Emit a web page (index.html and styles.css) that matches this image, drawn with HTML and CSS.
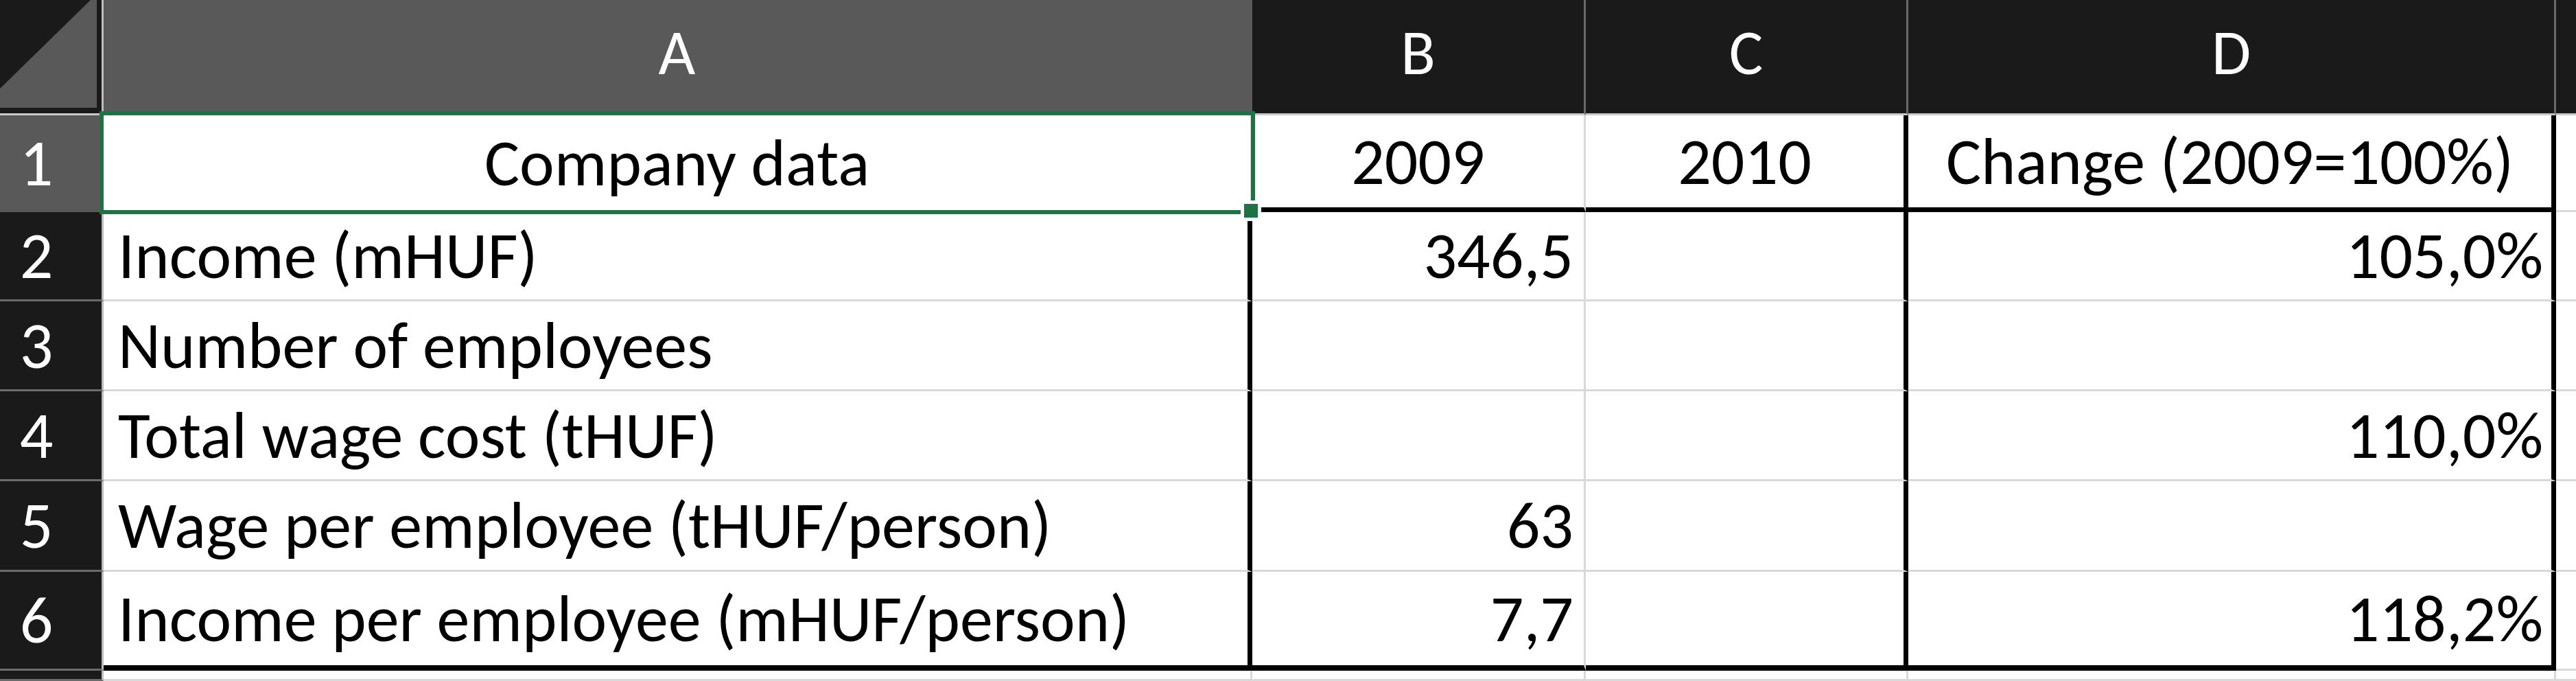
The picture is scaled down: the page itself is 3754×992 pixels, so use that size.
FILE: index.html
```html
<!DOCTYPE html>
<html lang="en">
<head>
<meta charset="utf-8">
<title>Company data</title>
<link rel="stylesheet" href="styles.css">
</head>
<body>
<div class="sheet">
  <div class="corner"><svg class="corner-tri" width="148" height="165" viewBox="0 0 148 165"><polygon points="132,0 141,0 141,157 0,157 0,129" fill="#595959"/></svg></div>
  <div class="ch ch-sel">A</div>
  <div class="ch">B</div>
  <div class="ch">C</div>
  <div class="ch">D</div>
  <div class="ch ch-last"></div>

  <div class="rh rh-sel">1</div>
  <div class="c ca r1 center">Company data</div>
  <div class="c cb r1 center">2009</div>
  <div class="c cc r1 center">2010</div>
  <div class="c cd r1 center">Change (2009=100%)</div>
  <div class="c ce"></div>

  <div class="rh">2</div>
  <div class="c ca">Income (mHUF)</div>
  <div class="c cb num">346,5</div>
  <div class="c cc"></div>
  <div class="c cd num">105,0%</div>
  <div class="c ce"></div>

  <div class="rh">3</div>
  <div class="c ca">Number of employees</div>
  <div class="c cb"></div>
  <div class="c cc"></div>
  <div class="c cd"></div>
  <div class="c ce"></div>

  <div class="rh">4</div>
  <div class="c ca">Total wage cost (tHUF)</div>
  <div class="c cb"></div>
  <div class="c cc"></div>
  <div class="c cd num">110,0%</div>
  <div class="c ce"></div>

  <div class="rh">5</div>
  <div class="c ca">Wage per employee (tHUF/person)</div>
  <div class="c cb num">63</div>
  <div class="c cc"></div>
  <div class="c cd"></div>
  <div class="c ce"></div>

  <div class="rh">6</div>
  <div class="c ca r6">Income per employee (mHUF/person)</div>
  <div class="c cb r6 num">7,7</div>
  <div class="c cc r6"></div>
  <div class="c cd r6 num">118,2%</div>
  <div class="c ce"></div>

  <div class="rh"></div>
  <div class="c ca plain"></div>
  <div class="c cb plain"></div>
  <div class="c cc plain"></div>
  <div class="c cd plain"></div>
  <div class="c ce"></div>

  <div class="selection"></div>
  <div class="handle"></div>
</div>
</body>
</html>
```

FILE: styles.css
```css
* { box-sizing: border-box; }
html, body { margin: 0; padding: 0; background: #ffffff; }
body { width: 3754px; height: 992px; overflow: hidden; }

.sheet {
  position: relative;
  display: grid;
  grid-template-columns: 151px 1674px 486px 470px 944px 1fr;
  grid-template-rows: 168px 141px 130px 131px 131px 132px 144px 1fr;
  width: 3754px;
  height: 992px;
  font-family: Carlito, Calibri, Lato, "Liberation Sans", sans-serif;
  font-size: 96px;
  color: #000;
}

.corner {
  background: #1a1a1a;
  border-right: 3px solid #bdbdbd;
  border-bottom: 3px solid #c8c8c8;
}
.corner-tri { display: block; }

.ch {
  background: #1a1a1a;
  color: #ffffff;
  font-size: 93px;
  display: flex;
  align-items: center;
  justify-content: center;
  padding-bottom: 14px;
  border-right: 3px solid #6b6b6b;
  border-bottom: 3px solid #c8c8c8;
}
.ch-sel { background: #595959; border-right-color: #595959; }

.rh {
  background: #1a1a1a;
  color: #ffffff;
  display: flex;
  align-items: center;
  justify-content: center;
  padding-right: 42px;
  border-right: 3px solid #bdbdbd;
  border-bottom: 3px solid #6b6b6b;
}
.rh-sel { background: #595959; border-bottom-color: #595959; }

.c {
  background: #ffffff;
  display: flex;
  align-items: center;
  padding: 0 15px 0 21px;
  white-space: nowrap;
  border-right: 3px solid #d9d9d9;
  border-bottom: 3px solid #d9d9d9;
}
.center { justify-content: center; padding: 0; }
.num { justify-content: flex-end; }

.ca { border-right: 7px solid #000; }
.ca.r1 { border-right: 3px solid #d9d9d9; }
.cc, .cd { border-right: 7px solid #000; }
.cd.num { padding-right: 12px; }
.ca.plain { border-right: 3px solid #d9d9d9; }
.cc.plain, .cd.plain { border-right: 3px solid #d9d9d9; }
.r1.cb, .r1.cc, .r1.cd { border-bottom: 7px solid #000; }
.r6 { border-bottom: 8px solid #000; }

.selection {
  position: absolute;
  left: 145px;
  top: 162px;
  width: 1684px;
  height: 150px;
  border: 6px solid #1f7244;
  pointer-events: none;
}
.handle {
  position: absolute;
  left: 1813px;
  top: 297px;
  width: 20px;
  height: 20px;
  background: #1f7244;
  box-shadow: 0 0 0 5px #ffffff;
}
```
